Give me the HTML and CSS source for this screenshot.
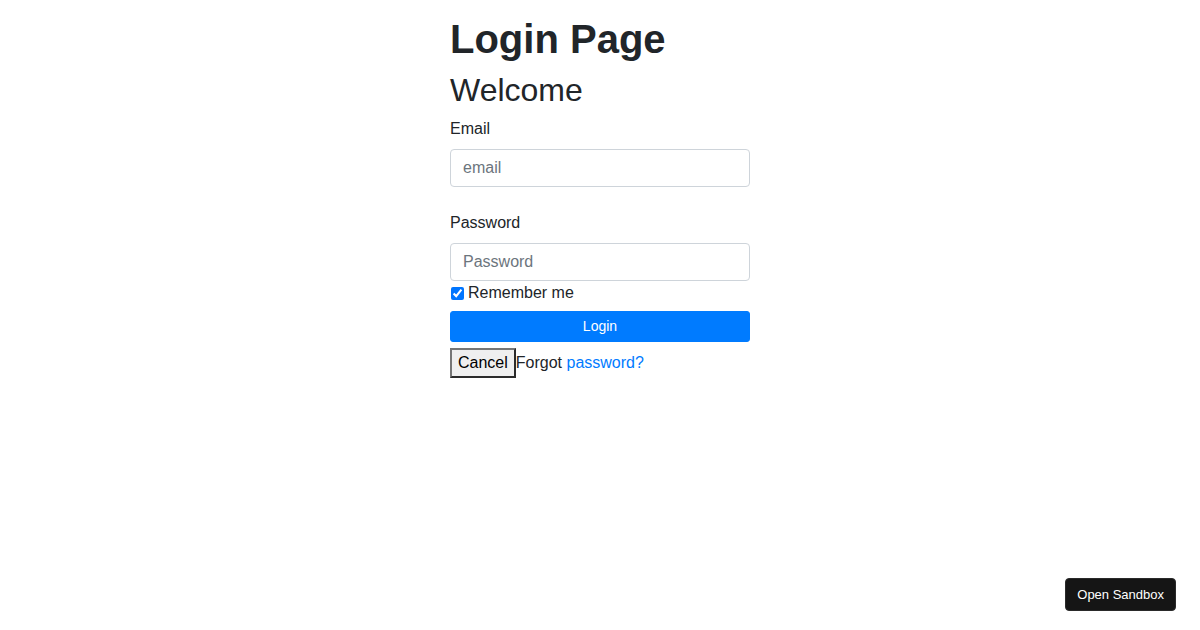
FILE: index.html
```html
<!DOCTYPE html>
<html lang="en">
<head>
<meta charset="utf-8">
<title>Login Page</title>
<link rel="stylesheet" href="styles.css">
</head>
<body>
<div class="container">
  <h1 class="title">Login Page</h1>
  <h2 class="subtitle">Welcome</h2>
  <form class="login-form">
    <div class="form-group">
      <label class="field-label" for="email">Email</label>
      <input class="form-control" id="email" type="email" placeholder="email">
    </div>
    <div class="form-group form-group-last">
      <label class="field-label" for="password">Password</label>
      <input class="form-control" id="password" type="password" placeholder="Password">
    </div>
    <div class="check-row">
      <input class="check" type="checkbox" id="remember" checked>
      <label for="remember">Remember me</label>
    </div>
    <button type="button" class="btn-login">Login</button>
    <div class="actions">
      <button type="button" class="btn-cancel">Cancel</button>
      <span>Forgot <a class="link" href="#">password?</a></span>
    </div>
  </form>
</div>
<button type="button" class="sandbox-btn">Open Sandbox</button>
</body>
</html>
```
FILE: styles.css
```css
* { box-sizing: border-box; }
html, body {
  margin: 0;
  padding: 0;
  background: #fff;
}
body {
  font-family: "Liberation Sans", Arial, sans-serif;
  font-size: 16px;
  line-height: 1.5;
  color: #212529;
}
.container {
  width: 300px;
  margin: 0 auto;
  padding-top: 15px;
}
.title {
  font-size: 40px;
  font-weight: 700;
  line-height: 1.2;
  margin: 0 0 8px;
}
.subtitle {
  font-size: 32px;
  font-weight: 400;
  line-height: 1.2;
  margin: 0 0 8px;
}
.login-form { margin: 0; }
.form-group {
  display: flex;
  flex-direction: column;
  margin-bottom: 24px;
}
.form-group-last { margin-bottom: 0; }
.field-label {
  display: block;
  margin-bottom: 8px;
}
.form-control {
  display: block;
  width: 100%;
  height: 38px;
  padding: 6px 12px;
  font-family: inherit;
  font-size: 16px;
  line-height: 1.5;
  color: #495057;
  background: #fff;
  border: 1px solid #ced4da;
  border-radius: 4px;
  outline: none;
}
.form-control::placeholder { color: #6c757d; opacity: 1; }
.check-row {
  display: flex;
  align-items: center;
  height: 24px;
}
.check {
  width: 13px;
  height: 13px;
  margin: 0 4px 0 1px;
  accent-color: #0075ff;
}
.btn-login {
  display: block;
  width: 100%;
  height: 31px;
  margin-top: 6px;
  padding: 4px 8px;
  font-family: inherit;
  font-size: 14px;
  line-height: 1.5;
  color: #fff;
  background: #007bff;
  border: 1px solid #007bff;
  border-radius: 3px;
}
.actions {
  display: flex;
  align-items: center;
  margin-top: 6px;
}
.btn-cancel {
  height: 30px;
  padding: 1px 6px;
  font-family: inherit;
  font-size: 16px;
  line-height: 24px;
  color: #000;
  background: #efefef;
  border-width: 2px;
  border-style: solid;
  border-color: #767676 #2b2b2b #2b2b2b #767676;
  border-radius: 0;
}
.link {
  color: #007bff;
  text-decoration: none;
}
.sandbox-btn {
  position: fixed;
  right: 24px;
  bottom: 19px;
  height: 33px;
  padding: 0 11px;
  font-family: "Liberation Sans", Arial, sans-serif;
  font-size: 13px;
  color: #fff;
  background: #151515;
  border: 1px solid #2a2a2a;
  border-radius: 4px;
}
```
